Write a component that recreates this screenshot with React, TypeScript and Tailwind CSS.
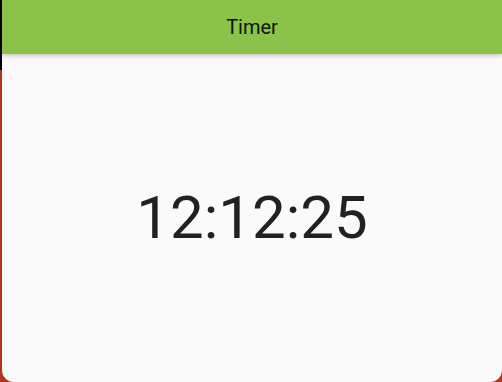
export default function App() {
  return (
    <div
      className="flex w-[502px] h-[382px] bg-[#b3361c] overflow-hidden"
      style={{ fontFamily: "Roboto, 'Noto Sans', sans-serif" }}
    >
      <div className="w-[2px] flex flex-col shrink-0">
        <div className="h-[70px] bg-black" />
      </div>
      <div className="flex-1 flex flex-col bg-[#fafafa] rounded-b-[12px] overflow-hidden">
        <header className="h-[54px] shrink-0 bg-[#8bc34a] flex items-center justify-center shadow-[0_2px_4px_rgba(0,0,0,0.2)] relative z-10">
          <span className="text-[20px] text-[#111] leading-none">Timer</span>
        </header>
        <main className="flex-1 flex items-center justify-center">
          <span className="text-[60px] text-[#212121] leading-none">12:12:25</span>
        </main>
      </div>
    </div>
  );
}
